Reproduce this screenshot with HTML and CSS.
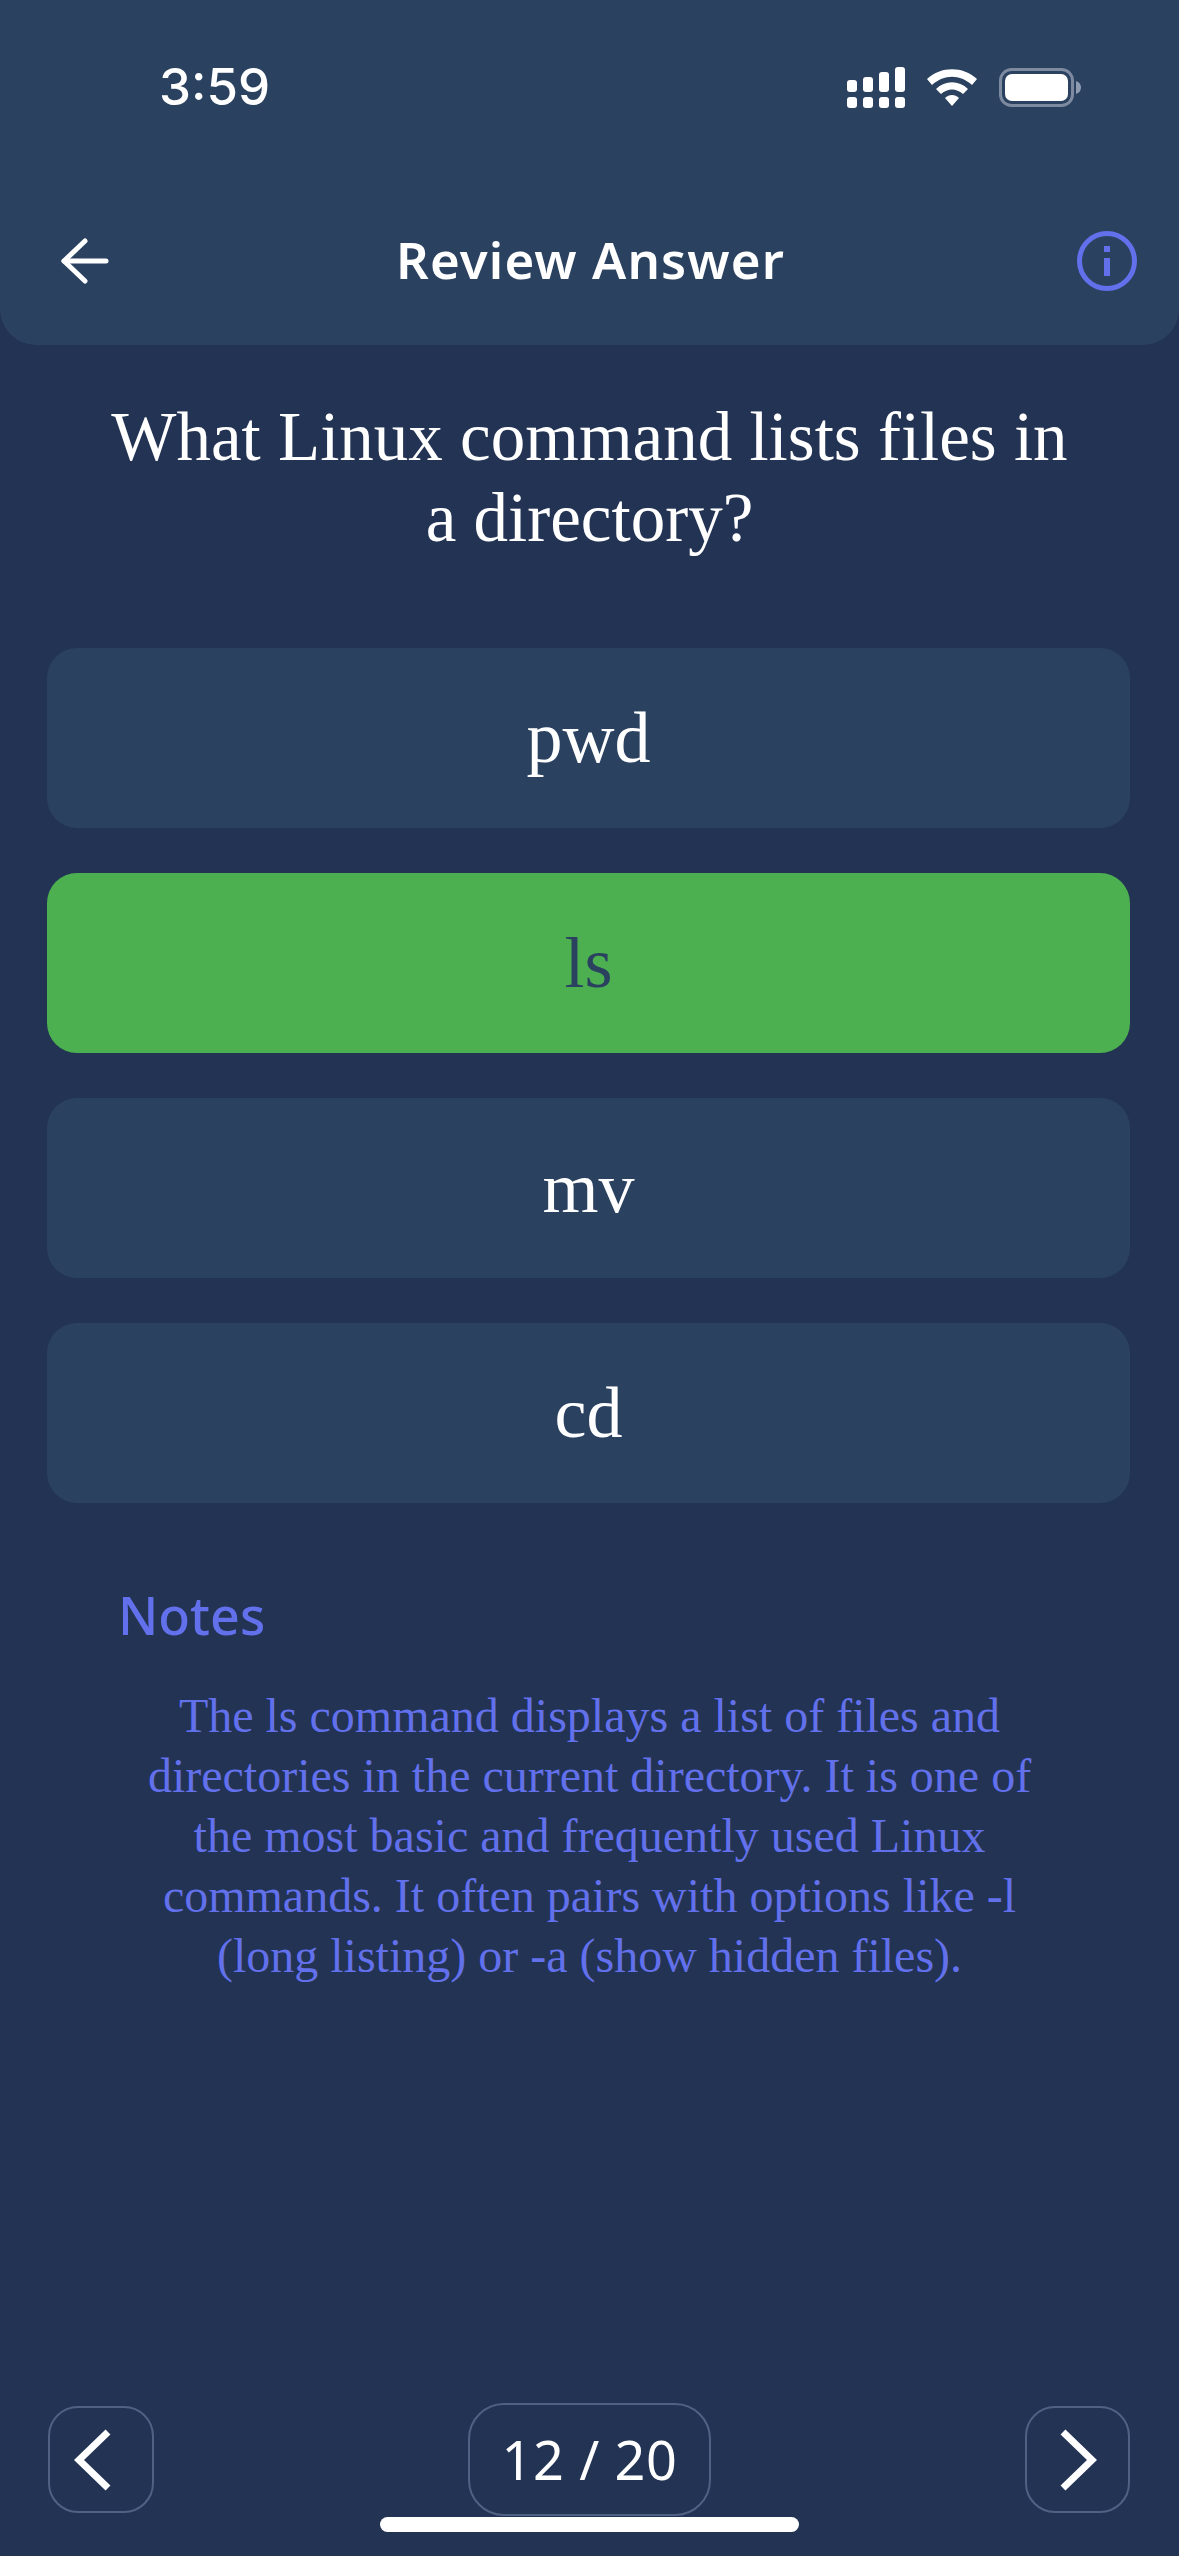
FILE: index.html
```html
<!DOCTYPE html>
<html lang="en">
<head>
	<meta charset="utf-8" />
	<meta name="viewport" content="width=device-width, initial-scale=1.0" />
	<title>Review Answer</title>
	<link rel="stylesheet" href="styles.css">
</head>

<body>
	<div class="screen">
		<header class="top-bar">
			<div class="status-bar">
				<span class="clock">3:59</span>
				<div class="status-icons">
					<svg class="icon-signal" width="58" height="41" viewBox="0 0 58 41" fill="#fff">
						<rect x="0" y="13" width="10" height="12" rx="3" />
						<rect x="16" y="10" width="10" height="15" rx="3" />
						<rect x="32" y="5" width="10" height="20" rx="3" />
						<rect x="48" y="0" width="10" height="25" rx="3" />
						<rect x="0" y="30" width="10" height="11" rx="3" />
						<rect x="16" y="30" width="10" height="11" rx="3" />
						<rect x="32" y="30" width="10" height="11" rx="3" />
						<rect x="48" y="30" width="10" height="11" rx="3" />
					</svg>
					<svg class="icon-wifi" width="50" height="37" viewBox="0 0 50 37" fill="#fff">
						<path d="M0 10 C14 -3 36 -3 50 10 L45 16 C33 5 17 5 5 16 Z" />
						<path d="M9 20 C18 11 32 11 41 20 L36 25 C29 19 21 19 14 25 Z" />
						<path d="M18 29 C22 25 28 25 32 29 L25 37 Z" />
					</svg>
					<svg class="icon-battery" width="82" height="39" viewBox="0 0 82 39">
						<rect x="1.5" y="1.5" width="72" height="36" rx="11" fill="none" stroke="#7d8aa0" stroke-width="3" />
						<rect x="6" y="6" width="63" height="27" rx="7" fill="#fff" />
						<path d="M77 13 C80 14 82 16 82 19.500 C82 23 80 25 77 26 Z" fill="#8f9bb0" />
					</svg>
				</div>
			</div>
			<nav class="nav-row">
				<svg class="icon-back" width="48" height="46" viewBox="0 0 48 46" fill="none" stroke="#fff" stroke-width="5" stroke-linecap="round" stroke-linejoin="round">
					<path d="M24 3 L3 23 L24 43" />
					<path d="M3 23 H45" />
				</svg>
				<h1 class="nav-title">Review Answer</h1>
				<svg class="icon-info" width="60" height="60" viewBox="0 0 60 60">
					<circle cx="30" cy="30" r="27.500" fill="none" stroke="#6271eb" stroke-width="5" />
					<rect x="27" y="15" width="6" height="6" fill="#6271eb" />
					<rect x="27" y="27" width="6" height="18" fill="#6271eb" />
				</svg>
			</nav>
		</header>

		<main class="content">
			<h2 class="question">What Linux command lists files in a directory?</h2>
			<div class="answers">
				<div class="answer">pwd</div>
				<div class="answer correct">ls</div>
				<div class="answer">mv</div>
				<div class="answer">cd</div>
			</div>
			<section class="notes">
				<h3 class="notes-title">Notes</h3>
				<p class="notes-body">The ls command displays a list of files and directories in the current directory. It is one of the most basic and frequently used Linux commands. It often pairs with options like -l (long listing) or -a (show hidden files).</p>
			</section>
		</main>

		<footer class="pager">
			<div class="pager-btn pager-prev">
				<svg width="38" height="62" viewBox="0 0 38 62" fill="none" stroke="#fff" stroke-width="7" stroke-linejoin="miter">
					<path d="M34 3 L5 31 L34 59" />
				</svg>
			</div>
			<div class="pager-count">12 / 20</div>
			<div class="pager-btn">
				<svg width="38" height="62" viewBox="0 0 38 62" fill="none" stroke="#fff" stroke-width="7" stroke-linejoin="miter">
					<path d="M4 3 L33 31 L4 59" />
				</svg>
			</div>
		</footer>
		<div class="home-indicator"></div>
	</div>
</body></html>
```
FILE: styles.css
```css
body {
	margin: 0;
	background: #233354;
	font-family: 'Liberation Serif', serif;
	color: #fff;
}
h1, h2, h3, p {
	margin: 0;
	font-weight: normal;
}
.screen {
	position: relative;
	display: flex;
	flex-direction: column;
	width: 1179px;
	height: 2556px;
	overflow: hidden;
}

/* top bar */
.top-bar {
	height: 345px;
	box-sizing: border-box;
	padding-top: 66px;
	background: #2a4160;
	border-radius: 0 0 36px 36px;
}
.status-bar {
	display: flex;
	justify-content: space-between;
	align-items: center;
	height: 42px;
	padding: 0 98px 0 159px;
}
.clock {
	font-family: 'Inter', sans-serif;
	font-size: 51px;
	font-weight: 500;
	line-height: 42px;
}
.status-icons {
	display: flex;
	align-items: center;
	gap: 22px;
}
.nav-row {
	display: flex;
	justify-content: space-between;
	align-items: center;
	height: 60px;
	margin-top: 123px;
	padding: 0 42px 0 61px;
}
.nav-title {
	padding: 0 5px 4px 0;
	font-family: 'Noto Sans', sans-serif;
	font-size: 51px;
	font-weight: 600;
	line-height: 56px;
	letter-spacing: 1.1px;
}

/* question and answers */
.content {
	flex: 1;
}
.question {
	padding: 52px 100px 0;
	font-size: 69px;
	line-height: 81px;
	text-align: center;
}
.answers {
	display: flex;
	flex-direction: column;
	gap: 45px;
	margin: 89px 49px 0 47px;
}
.answer {
	height: 180px;
	background: #2a4160;
	border-radius: 30px;
	font-size: 72px;
	line-height: 180px;
	text-align: center;
}
.answer.correct {
	background: #4caf50;
	color: #2a4160;
}

/* notes */
.notes {
	padding: 76px 118px 0;
	color: #6271eb;
}
.notes-title {
	font-family: 'Noto Sans', sans-serif;
	font-size: 52px;
	font-weight: 500;
	line-height: 72px;
}
.notes-body {
	margin-top: 35px;
	font-size: 48px;
	line-height: 60px;
	text-align: center;
}

/* bottom pager */
.pager {
	display: flex;
	justify-content: space-between;
	align-items: center;
	height: 113px;
	margin-bottom: 40px;
	padding: 0 49px 0 48px;
}
.pager-btn {
	display: flex;
	justify-content: center;
	align-items: center;
	width: 105px;
	height: 107px;
	box-sizing: border-box;
	border: 2px solid #506283;
	border-radius: 30px;
}
.pager-prev {
	width: 106px;
	padding-right: 16px;
}
.pager-count {
	width: 243px;
	height: 113px;
	box-sizing: border-box;
	border: 2px solid #506283;
	border-radius: 36px;
	font-family: 'Noto Sans', sans-serif;
	font-size: 54px;
	line-height: 109px;
	letter-spacing: 0.600px;
	text-align: center;
}
.home-indicator {
	position: absolute;
	left: 380px;
	bottom: 24px;
	width: 419px;
	height: 15px;
	background: #fff;
	border-radius: 8px;
}
```
